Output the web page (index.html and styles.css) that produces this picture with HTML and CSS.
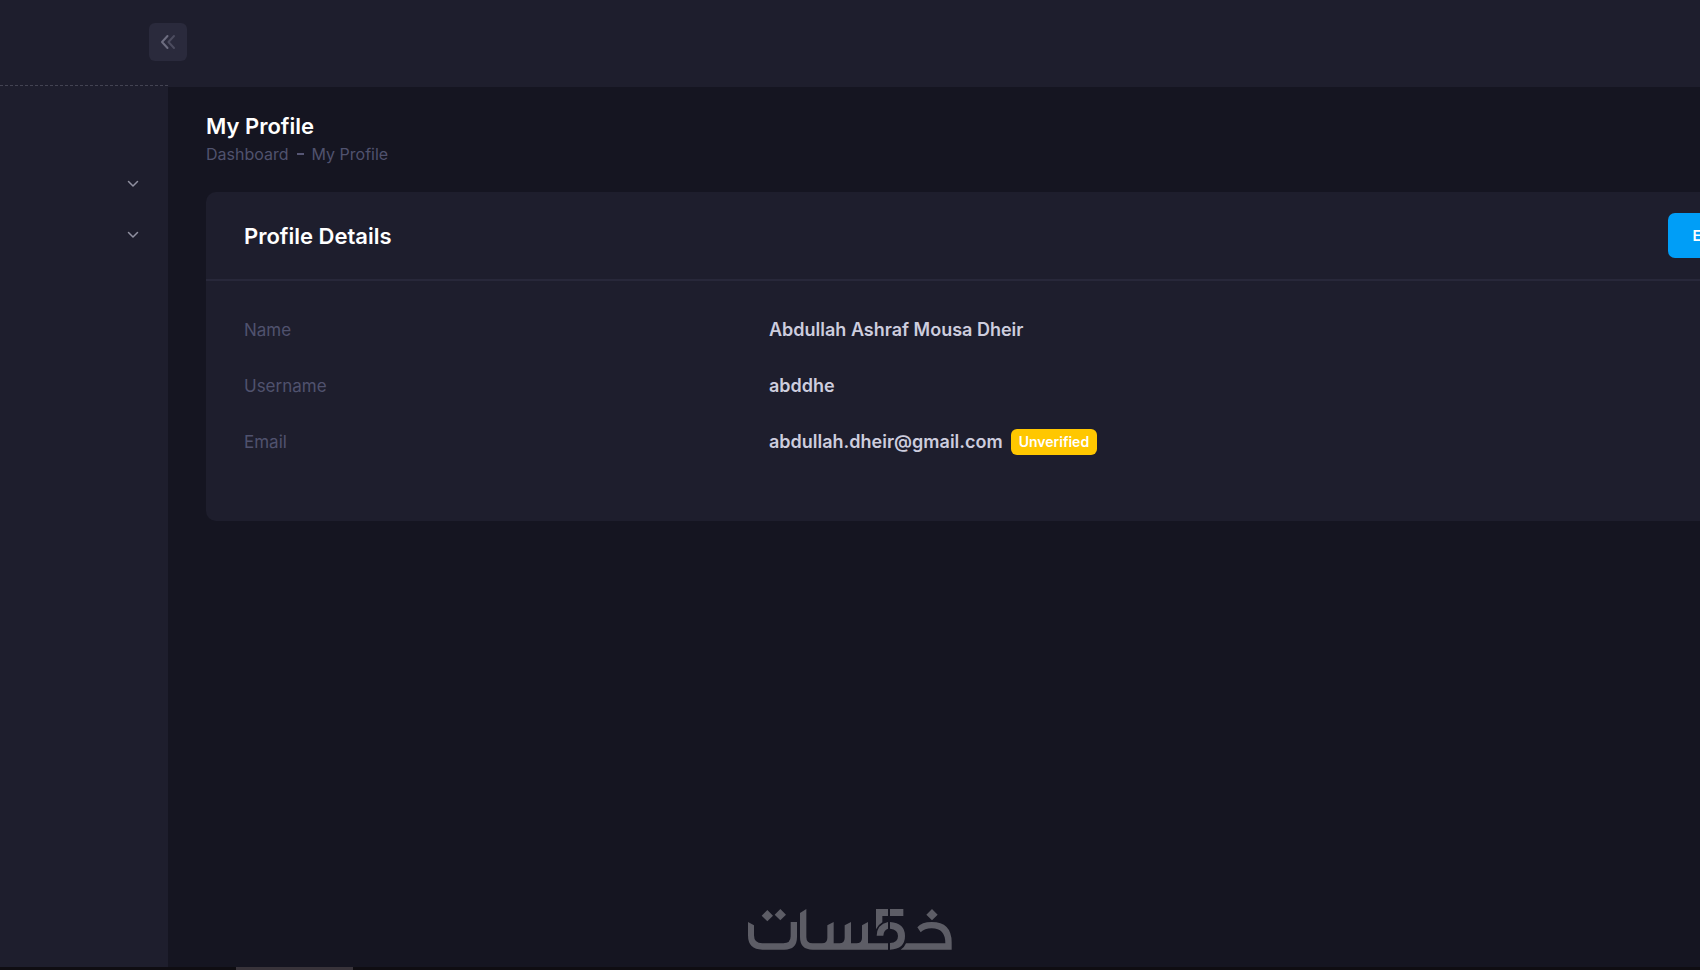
FILE: index.html
```html
<!DOCTYPE html>
<html lang="en">
<head>
    <meta charset="UTF-8">
    <meta name="viewport" content="width=device-width, initial-scale=1.0">
    <title>My Profile</title>
    <link rel="stylesheet" href="styles.css">
</head>
<body>
    <header class="header">
        <div class="brand">
            <button class="toggle" type="button" aria-label="Toggle sidebar">
                <svg width="16" height="16" viewBox="0 0 16 16" fill="none" stroke-width="2" stroke-linecap="round" stroke-linejoin="round">
                    <path d="M7.5 2 2 8l5.500 6" stroke="#6d6d80"/>
                    <path d="M14 2 8.500 8l5.500 6" stroke="#4c4c5f"/>
                </svg>
            </button>
        </div>
    </header>

    <div class="page">
        <aside class="sidebar">
            <button class="menu-item" type="button" aria-label="Open menu">
                <svg width="12" height="8" viewBox="0 0 12 8"><path d="M1.500 1.500 6 6l4.500-4.500"/></svg>
            </button>
            <button class="menu-item" type="button" aria-label="Open menu">
                <svg width="12" height="8" viewBox="0 0 12 8"><path d="M1.500 1.500 6 6l4.500-4.500"/></svg>
            </button>
        </aside>

        <main class="content">
            <h1 class="title">My Profile</h1>
            <nav class="breadcrumb">
                <a href="#">Dashboard</a>
                <span class="dash"></span>
                <span>My Profile</span>
            </nav>

            <section class="card">
                <div class="card-header">
                    <h2 class="title">Profile Details</h2>
                    <a href="#" class="btn">Edit Profile</a>
                </div>
                <dl class="details">
                    <dt>Name</dt>
                    <dd>Abdullah Ashraf Mousa Dheir</dd>
                    <dt>Username</dt>
                    <dd>abddhe</dd>
                    <dt>Email</dt>
                    <dd>abdullah.dheir@gmail.com <span class="badge">Unverified</span></dd>
                </dl>
            </section>
        </main>
    </div>

    <div class="scrollbar"><div class="thumb"></div></div>

    <!-- Logo -->
    <svg class="logo" viewBox="54 58 612 123" role="img" aria-label="خمسات">
        <path d="M54 97 72 107V137Q72 161 97 161H160Q182 161 182 140V97H201V142Q201 180 163 180H97Q54 180 54 137Z"/>
        <path d="M210 70 229 58V142Q229 161 248 161H276Q292 161 292 145V107L311 97V161H328Q344 161 344 145V107L363 97V161H379Q396 161 396 145V107L414 97V161H474V180H248Q210 180 210 142Z"/>
        <path d="M438 58H474V79H457V98Q446 104 438 119ZM480 58H520V79H480Z"/>
        <path d="M474 97V117Q461 121 460 138H440Q441 104 474 97ZM480 97Q525 100 525 139T480 180V160Q504 159 504 139T480 117Z"/>
        <path d="M562 113Q575 97 605 97Q665 97 665 158V180H512Q523 174 528 161H646Q646 116 605 116Q584 116 572 128Z"/>
        <path d="M112 61 129 78 112 95 95 78ZM151 58 168 75 151 92 134 75ZM606 58 623 75 606 92 589 75Z"/>
    </svg>
</body>
</html>
```

FILE: styles.css
```css
* {
    box-sizing: border-box;
}

body {
    margin: 0;
    min-height: 100vh;
    display: flex;
    flex-direction: column;
    overflow-x: hidden;
    font-family: Inter, "Liberation Sans", sans-serif;
    font-size: 16px;
    color: #cdcdde;
    background-color: #151521;
}

.header {
    height: 87px;
    background-color: #1e1e2d;
}

.brand {
    position: relative;
    width: 168px;
    height: 86px;
    border-bottom: 1px dashed #444453;
}

/* Sits over the edge of the sidebar */
.toggle {
    position: absolute;
    top: 23px;
    right: -19px;
    width: 38px;
    height: 38px;
    padding: 0;
    display: flex;
    justify-content: center;
    align-items: center;
    border: none;
    border-radius: 6px;
    background-color: #2a2a3c;
    cursor: pointer;
}

.page {
    flex: 1;
    display: flex;
}

.sidebar {
    width: 168px;
    padding-top: 71px;
    background-color: #1e1e2d;
}

.menu-item {
    width: 100%;
    height: 51px;
    padding: 0 29px;
    display: flex;
    justify-content: flex-end;
    align-items: center;
    border: none;
    background: none;
    cursor: pointer;
}

.menu-item path {
    fill: none;
    stroke: #9090a0;
    stroke-width: 1.5;
    stroke-linecap: round;
    stroke-linejoin: round;
}

.content {
    flex: 1;
    padding: 24px 0 0 38px;
}

.title {
    margin: 0;
    font-size: 22px;
    line-height: 30px;
    font-weight: 600;
    color: white;
}

.breadcrumb {
    display: flex;
    align-items: center;
    gap: 8px;
    font-size: 16px;
    line-height: 26px;
    color: #50526e;
}

.breadcrumb a {
    color: inherit;
    text-decoration: none;
}

.dash {
    width: 7px;
    height: 2px;
    background-color: #565674;
}

/* The card runs past the right side of the window */
.card {
    margin: 25px -133px 0 0;
    border-radius: 10px;
    background-color: #1e1e2d;
}

.card-header {
    display: flex;
    justify-content: space-between;
    align-items: center;
    height: 89px;
    padding: 0 38px;
    border-bottom: 2px solid #28283a;
}

.btn {
    padding: 0 24px;
    border-radius: 7px;
    font-size: 15px;
    line-height: 45px;
    font-weight: 600;
    color: white;
    text-decoration: none;
    background-color: #009ef7;
}

.details {
    display: grid;
    grid-template-columns: 1fr 2fr;
    row-gap: 30px;
    margin: 0;
    padding: 36px 14px 66px 38px;
    line-height: 26px;
}

.details dt {
    font-size: 17px;
    color: #50526e;
}

.details dd {
    display: flex;
    align-items: center;
    gap: 8px;
    margin: 0;
    font-size: 18px;
    font-weight: 600;
}

.badge {
    padding: 0 8px;
    border-radius: 6px;
    font-size: 14px;
    color: white;
    background-color: #ffc700;
}

.scrollbar {
    height: 3px;
    padding-left: 236px;
    background-color: #0f0d12;
}

.thumb {
    width: 117px;
    height: 100%;
    background-color: #38333a;
}

.logo {
    position: fixed;
    bottom: 20px;
    left: 50%;
    width: 204px;
    transform: translateX(-50%);
    fill: #5d5d66;
}
```
